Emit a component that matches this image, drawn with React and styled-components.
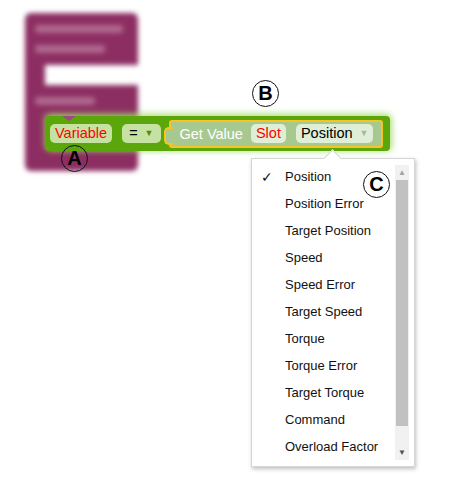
import styled, { createGlobalStyle } from "styled-components"

const items = [
    "Position",
    "Position Error",
    "Target Position",
    "Speed",
    "Speed Error",
    "Target Speed",
    "Torque",
    "Torque Error",
    "Target Torque",
    "Command",
    "Overload Factor",
]

const GlobalStyle = createGlobalStyle`
    html, body {
        margin: 0;
        padding: 0;
        background: #ffffff;
        font-family: Arial, "Liberation Sans", sans-serif;
    }
`

// the blockly workspace, blocks sit on it where they were dropped
const Workspace = styled.div`
    position: relative;
    width: 450px;
    height: 500px;
    overflow: hidden;
    background: #ffffff;
`

const BlurredBlock = styled.div`
    position: absolute;
    left: 25px;
    top: 13px;
    width: 113px;
    display: flex;
    flex-direction: column;
    filter: blur(2.6px);
`

const PurpleTop = styled.div`
    background: #8d2e62;
    border-radius: 6px 6px 0 0;
    height: 52px;
    padding: 12px 10px 0 10px;
    box-sizing: border-box;
    display: flex;
    flex-direction: column;
    gap: 12px;
`

const PurpleMiddle = styled.div`
    display: flex;
    height: 20px;
`

const PurpleArm = styled.div`
    width: 20px;
    background: #8d2e62;
`

const PurpleBottom = styled.div`
    background: #8d2e62;
    border-radius: 0 0 6px 6px;
    height: 86px;
    padding: 12px 10px;
    box-sizing: border-box;
`

const BlurText = styled.div`
    height: 8px;
    width: ${(p) => p.w}px;
    background: #b8779a;
    border-radius: 3px;
    opacity: 0.8;
`

const GreenBlock = styled.div`
    position: absolute;
    left: 45px;
    top: 116px;
    width: 345px;
    height: 35px;
    box-sizing: border-box;
    background: #5ba70b;
    border-radius: 4px;
    display: flex;
    align-items: center;
    padding-left: 5px;
    box-shadow: 0 -2px 7px rgba(165, 220, 110, 0.75), 2px 0 6px rgba(165, 220, 110, 0.6);

    &::before {
        content: "";
        position: absolute;
        left: 17px;
        top: 0;
        width: 0;
        height: 0;
        border-left: 7px solid transparent;
        border-right: 7px solid transparent;
        border-top: 5px solid #9a4d77;
    }
`

const Pill = styled.div`
    height: 19px;
    padding: 0 ${(p) => p.px || 5}px;
    border-radius: 5px;
    background: ${(p) => p.bg || "#c5e2a3"};
    color: ${(p) => p.color || "#000"};
    font-size: 14.5px;
    line-height: 19px;
    display: flex;
    align-items: center;
    gap: 7px;
    white-space: nowrap;
    margin-right: ${(p) => p.mr || 0}px;
`

const Caret = styled.span`
    font-size: 9px;
    color: ${(p) => p.color};
`

const ValueBlock = styled.div`
    position: relative;
    margin-left: 8px;
    height: 28px;
    width: 214px;
    box-sizing: border-box;
    border: 2px solid #f6c523;
    border-radius: 3px;
    background: #a7c990;
    display: flex;
    align-items: center;
    padding-left: 9px;
    gap: 7px;

    &::before {
        content: "";
        position: absolute;
        left: -7px;
        top: 5px;
        width: 7px;
        height: 14px;
        background: #a7c990;
        border: 2px solid #f6c523;
        border-right: none;
        border-radius: 5px 0 0 5px;
    }
`

const Label = styled.span`
    color: #ffffff;
    font-size: 14.5px;
    margin-right: 1px;
`

const Badge = styled.div`
    position: absolute;
    left: ${(p) => p.x - 13}px;
    top: ${(p) => p.y - 13}px;
    width: 25px;
    height: 25px;
    border: 1px solid #111;
    border-radius: 50%;
    background: ${(p) => (p.clear ? "transparent" : "#fff")};
    display: flex;
    align-items: center;
    justify-content: center;
    font-weight: 700;
    font-size: 20px;
    color: #000;
`

const Menu = styled.div`
    position: absolute;
    left: 251px;
    top: 158px;
    width: 164px;
    height: 309px;
    box-sizing: border-box;
    background: #ffffff;
    border: 1px solid #d6d6d6;
    box-shadow: 1px 2px 4px rgba(0, 0, 0, 0.25);
    display: flex;
    padding: 6px 5px 6px 0;

    &::before {
        content: "";
        position: absolute;
        left: 74px;
        top: -7px;
        width: 12px;
        height: 12px;
        background: #fff;
        border-left: 1px solid #d6d6d6;
        border-top: 1px solid #d6d6d6;
        transform: rotate(45deg);
    }
`

const List = styled.div`
    flex: 1;
    display: flex;
    flex-direction: column;
    padding-top: 5px;
`

const Item = styled.div`
    flex-shrink: 0;
    height: 27px;
    line-height: 14px;
    font-size: 13px;
    color: #111;
    display: flex;
`

const Check = styled.span`
    width: 33px;
    text-align: right;
    padding-right: 12px;
    box-sizing: border-box;
    font-size: 14px;
`

const Scrollbar = styled.div`
    width: 14px;
    background: #f1f1f1;
    display: flex;
    flex-direction: column;
    align-items: center;
`

const Arrow = styled.div`
    height: 15px;
    display: flex;
    align-items: center;
    justify-content: center;
    font-size: 8px;
    color: ${(p) => p.color};
`

const Thumb = styled.div`
    width: 12px;
    height: 246px;
    background: #c1c1c1;
`

const Spacer = styled.div`
    flex: 1;
`

export default function App() {
    return (
        <>
            <GlobalStyle />
            <Workspace>
                <BlurredBlock>
                    <PurpleTop>
                        <BlurText w={88} />
                        <BlurText w={70} />
                    </PurpleTop>
                    <PurpleMiddle>
                        <PurpleArm />
                    </PurpleMiddle>
                    <PurpleBottom>
                        <BlurText w={60} />
                    </PurpleBottom>
                </BlurredBlock>

                <GreenBlock>
                    <Pill color="#ff0000" mr={10}>Variable</Pill>
                    <Pill px={7}>
                        =<Caret color="#4e8f0c">▼</Caret>
                    </Pill>
                    <ValueBlock>
                        <Label>Get Value</Label>
                        <Pill bg="#dfeed6" color="#ff0000" mr={3}>Slot</Pill>
                        <Pill bg="#dfeed6" px={5}>
                            Position<Caret color="#a7b8a0">▼</Caret>
                        </Pill>
                    </ValueBlock>
                </GreenBlock>

                <Badge x={74} y={158} clear>A</Badge>
                <Badge x={265} y={93}>B</Badge>

                <Menu>
                    <List>
                        {items.map((name, i) => (
                            <Item key={name}>
                                <Check>{i === 0 ? "✓" : ""}</Check>
                                {name}
                            </Item>
                        ))}
                    </List>
                    <Scrollbar>
                        <Arrow color="#a3a3a3">▲</Arrow>
                        <Thumb />
                        <Spacer />
                        <Arrow color="#505050">▼</Arrow>
                    </Scrollbar>
                    <Badge x={124} y={25}>C</Badge>
                </Menu>
            </Workspace>
        </>
    )
}
